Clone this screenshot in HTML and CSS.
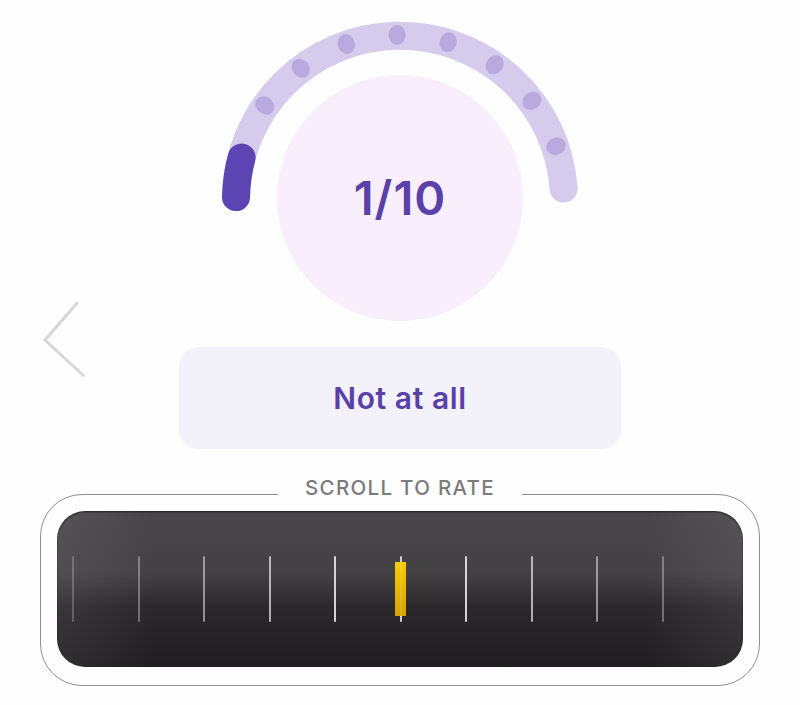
FILE: index.html
```html
<!DOCTYPE html>
<html>
	<head>
		<title>Rate</title>
		<link rel="stylesheet" href="styles.css">
	</head>
	<body>
		<main class="screen">
			<button class="nav-back" aria-label="Back">
				<svg width="50" height="82" viewBox="0 0 50 82">
					<path d="M38 4 L5 42 L44 78" />
				</svg>
			</button>

			<div class="gauge">
				<svg class="gauge-arc" width="400" height="330" viewBox="0 0 400 330">
					<circle class="gauge-face" cx="200" cy="198" r="123" />
					<path class="gauge-track" d="M36 197.1 A164 164 0 0 1 363.6 188.6" />
					<g class="gauge-dots">
						<ellipse cx="64.8" cy="105.4" rx="8.5" ry="10" transform="rotate(-55 64.8 105.4)" />
						<ellipse cx="100.7" cy="68.2" rx="8.5" ry="10" transform="rotate(-37 100.7 68.2)" />
						<ellipse cx="146.3" cy="44" rx="8.5" ry="10" transform="rotate(-19 146.3 44)" />
						<ellipse cx="197.1" cy="35" rx="8.5" ry="10" transform="rotate(-1 197.1 35)" />
						<ellipse cx="248.2" cy="42.2" rx="8.5" ry="10" transform="rotate(17 248.2 42.2)" />
						<ellipse cx="294.6" cy="64.8" rx="8.5" ry="10" transform="rotate(35 294.6 64.8)" />
						<ellipse cx="331.8" cy="100.7" rx="8.5" ry="10" transform="rotate(53 331.8 100.7)" />
						<ellipse cx="356" cy="146.3" rx="8.5" ry="10" transform="rotate(71 356 146.3)" />
					</g>
					<path class="gauge-fill" d="M36 197.1 A164 164 0 0 1 41.6 157.6" />
				</svg>
				<div class="gauge-value">1/10</div>
			</div>

			<div class="answer">Not at all</div>

			<fieldset class="scroll-rate">
				<legend>SCROLL TO RATE</legend>
				<div class="wheel">
					<div class="ticks">
						<span class="tick t1"></span>
						<span class="tick t2"></span>
						<span class="tick t3"></span>
						<span class="tick t4"></span>
						<span class="tick t5"></span>
						<span class="tick active"></span>
						<span class="tick t5"></span>
						<span class="tick t4"></span>
						<span class="tick t3"></span>
						<span class="tick t2"></span>
					</div>
				</div>
			</fieldset>
		</main>
	</body>
</html>
```

FILE: styles.css
```css
body {
	margin: 0;
	background: #fefefe;
	font-family: Inter, "Noto Sans", sans-serif;
}

.screen {
	position: relative;
	width: 800px;
	height: 705px;
	overflow: hidden;
}

.nav-back {
	position: absolute;
	left: 40px;
	top: 298px;
	padding: 0;
	border: none;
	background: none;
}
.nav-back path {
	fill: none;
	stroke: #d7d7d7;
	stroke-width: 3;
}

.gauge {
	position: relative;
	width: 400px;
	height: 330px;
	margin: 0 auto;
}
.gauge-arc {
	display: block;
}
.gauge-face {
	fill: #f8eefc;
}
.gauge-track {
	fill: none;
	stroke: #d5cbed;
	stroke-width: 28;
	stroke-linecap: round;
}
.gauge-dots ellipse {
	fill: #b8a9df;
}
.gauge-fill {
	fill: none;
	stroke: #5c45b3;
	stroke-width: 28;
	stroke-linecap: round;
}
.gauge-value {
	position: absolute;
	left: 0;
	right: 0;
	top: 174px;
	text-align: center;
	font-size: 47px;
	line-height: 1;
	font-weight: 600;
	letter-spacing: 1px;
	color: #5a41a9;
}

.answer {
	width: 442px;
	height: 102px;
	margin: 17px auto 0;
	border-radius: 20px;
	background: #f3f1f9;
	display: flex;
	align-items: center;
	justify-content: center;
	font-size: 30px;
	font-weight: 600;
	letter-spacing: 0.6px;
	color: #5a41a9;
}

.scroll-rate {
	margin: 28px 40px 0;
	padding: 0 16px 18px;
	border: 1.5px solid #8f8f8f;
	border-radius: 42px;
}
.scroll-rate legend {
	margin: 0 auto;
	padding: 0 27px 12px;
	font-size: 20.5px;
	line-height: 22px;
	font-weight: 500;
	letter-spacing: 1.3px;
	color: #7b7b7d;
}

.wheel {
	height: 156px;
	border-radius: 28px;
	background:
		linear-gradient(90deg, rgba(255, 255, 255, 0.07), rgba(255, 255, 255, 0) 14%, rgba(255, 255, 255, 0) 86%, rgba(255, 255, 255, 0.07)),
		linear-gradient(180deg, #49464a 0%, #444145 40%, #2b282b 62%, #211e21 100%);
	box-shadow: inset 0 1px 2px rgba(0, 0, 0, 0.6);
	display: flex;
	align-items: center;
}
.ticks {
	display: flex;
	align-items: center;
	gap: 63.5px;
	padding-left: 15px;
}
.tick {
	position: relative;
	width: 2px;
	height: 66px;
	border-radius: 1px;
	background: #e6e6e6;
}
.t1 { opacity: 0.25; }
.t2 { opacity: 0.38; }
.t3 { opacity: 0.55; }
.t4 { opacity: 0.72; }
.t5 { opacity: 0.9; }

.tick.active {
	background: #cfcfcf;
}
.tick.active::before {
	content: "";
	position: absolute;
	left: -4.5px;
	top: 6px;
	width: 11px;
	height: 54px;
	background: linear-gradient(180deg, #f9cb00, #d6a200);
}
.tick.active::after {
	content: "";
	position: absolute;
	left: 0;
	top: 6px;
	width: 2px;
	height: 54px;
	background: rgba(255, 255, 255, 0.12);
}
```
